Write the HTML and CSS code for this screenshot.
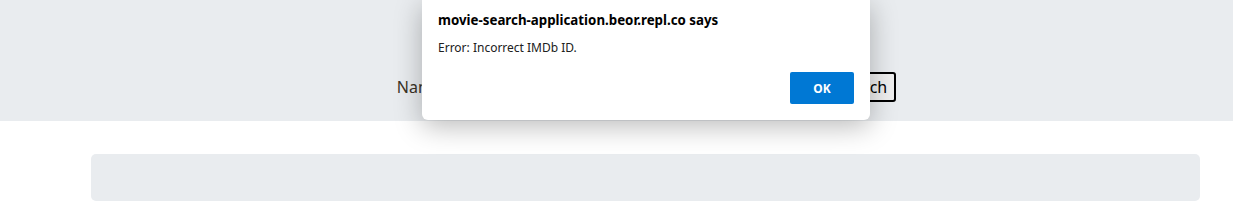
FILE: index.html
```html
<!DOCTYPE html>
<html lang="en">
<head>
    <meta charset="UTF-8">
    <meta name="viewport" content="width=device-width, initial-scale=1.0">
    <title>Movie Search</title>
    <link rel="stylesheet" href="styles.css">
</head>
<body>
    <div class="top">
        <form class="frm">
            <label class="lbl">Name</label>
            <input class="inp" type="text">
            <label class="lbl">IMDb ID</label>
            <input class="inp" type="text">
            <button class="btn" type="button">Search</button>
        </form>
    </div>
    <div class="res"></div>

    <div class="dlg">
        <div class="ttl">movie-search-application.beor.repl.co says</div>
        <div class="msg">Error: Incorrect IMDb ID.</div>
        <div class="act"><button class="ok">OK</button></div>
    </div>
</body>
</html>
```

FILE: styles.css
```css
*{
    margin:0;
    padding:0;
    box-sizing:border-box;
}
body{
    font-family:"Noto Sans","Open Sans",sans-serif;
    background:#fff;
    color:#212529;
}
.top{
    height:121px;
    background:#e9ecef;
    padding-top:72px;
    padding-left:60px;
}
.frm{
    display:flex;
    justify-content:center;
    align-items:center;
    gap:8px;
    height:30px;
}
.lbl{
    font-size:16px;
    color:#3b3326;
}
.inp{
    width:146px;
    height:28px;
    border:1px solid #767676;
    border-radius:2px;
}
.btn{
    height:30px;
    padding:0 7px 0 6px;
    font-family:inherit;
    font-size:16px;
    color:#000;
    background:#efefef;
    border:2px solid #000;
    border-radius:3px;
}
.res{
    height:47px;
    margin:33px 33px 0 91px;
    background:#e9ecef;
    border-radius:5px;
}
.dlg{
    position:absolute;
    top:0;
    left:422px;
    width:448px;
    height:120px;
    background:#fff;
    border-radius:0 0 6px 6px;
    box-shadow:0 6px 28px rgba(0,0,0,.28);
    padding:11px 16px 0 16px;
    color:#000;
}
.ttl{
    font-size:13.3px;
    font-weight:700;
    line-height:18px;
}
.msg{
    font-size:12px;
    line-height:16px;
    margin-top:11px;
    color:#202020;
}
.act{
    display:flex;
    justify-content:flex-end;
    margin-top:16px;
}
.ok{
    width:64px;
    height:32px;
    background:#0078d4;
    color:#fff;
    border:0;
    border-radius:2px;
    font-family:inherit;
    font-size:12px;
    font-weight:700;
}
```
